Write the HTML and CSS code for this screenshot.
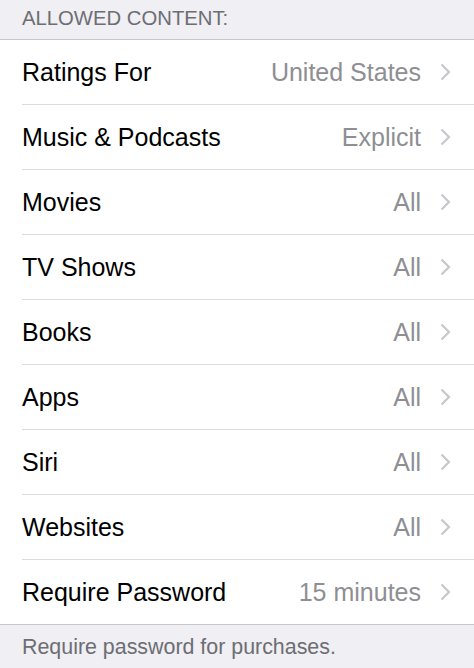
FILE: index.html
```html
<!DOCTYPE html>
<html>
	<head>
		<title>Allowed Content</title>
		<link rel="stylesheet" href="styles.css">
	</head>

	<body>
		<div class="groupHeader">ALLOWED CONTENT:</div>
		<ul class="group">
			<li class="row"><div class="cell"><span class="label">Ratings For</span><span class="value">United States</span><svg class="chevron" width="11" height="18" viewBox="0 0 11 18"><path d="M1.5 1.5 L9 9 L1.5 16.5" /></svg></div></li>
			<li class="row"><div class="cell"><span class="label">Music &amp; Podcasts</span><span class="value">Explicit</span><svg class="chevron" width="11" height="18" viewBox="0 0 11 18"><path d="M1.5 1.5 L9 9 L1.5 16.5" /></svg></div></li>
			<li class="row"><div class="cell"><span class="label">Movies</span><span class="value">All</span><svg class="chevron" width="11" height="18" viewBox="0 0 11 18"><path d="M1.5 1.5 L9 9 L1.5 16.5" /></svg></div></li>
			<li class="row"><div class="cell"><span class="label">TV Shows</span><span class="value">All</span><svg class="chevron" width="11" height="18" viewBox="0 0 11 18"><path d="M1.5 1.5 L9 9 L1.5 16.5" /></svg></div></li>
			<li class="row"><div class="cell"><span class="label">Books</span><span class="value">All</span><svg class="chevron" width="11" height="18" viewBox="0 0 11 18"><path d="M1.5 1.5 L9 9 L1.5 16.5" /></svg></div></li>
			<li class="row"><div class="cell"><span class="label">Apps</span><span class="value">All</span><svg class="chevron" width="11" height="18" viewBox="0 0 11 18"><path d="M1.5 1.5 L9 9 L1.5 16.5" /></svg></div></li>
			<li class="row"><div class="cell"><span class="label">Siri</span><span class="value">All</span><svg class="chevron" width="11" height="18" viewBox="0 0 11 18"><path d="M1.5 1.5 L9 9 L1.5 16.5" /></svg></div></li>
			<li class="row"><div class="cell"><span class="label">Websites</span><span class="value">All</span><svg class="chevron" width="11" height="18" viewBox="0 0 11 18"><path d="M1.5 1.5 L9 9 L1.5 16.5" /></svg></div></li>
			<li class="row"><div class="cell"><span class="label">Require Password</span><span class="value">15 minutes</span><svg class="chevron" width="11" height="18" viewBox="0 0 11 18"><path d="M1.5 1.5 L9 9 L1.5 16.5" /></svg></div></li>
		</ul>
		<div class="groupFooter">Require password for purchases.</div>
	</body>
</html>
```

FILE: styles.css
```css
html, body {
	margin: 0px;
	padding: 0px;
	overflow: hidden;
	font-family: "Liberation Sans", Arial, sans-serif;
	background: #efeff4;
	color: black;
}

.groupHeader {
	box-sizing: border-box;
	height: 40px;
	padding: 6px 22px 0px 22px;
	font-size: 20.3px;
	line-height: 24px;
	color: #6d6d72;
	border-bottom: 1px solid #c8c7cc;
}

.group {
	list-style: none;
	margin: 0px;
	padding: 0px;
	background: white;
	border-bottom: 1px solid #c8c7cc;
}

.row {
	padding-left: 22px;
}

.cell {
	display: flex;
	align-items: center;
	height: 64px;
	padding-right: 23px;
	border-bottom: 1px solid #dcdce0;
	font-size: 25px;
	line-height: 64px;
}

.row:last-child .cell {
	border-bottom: none;
}

.label {
	flex: 1;
}

.value {
	color: #8e8e93;
}

.chevron {
	margin-left: 19px;
	fill: none;
	stroke: #c7c7cc;
	stroke-width: 2.2;
}

.groupFooter {
	padding: 10px 22px 0px 22px;
	font-size: 21.4px;
	line-height: 24px;
	color: #6d6d72;
}
```
